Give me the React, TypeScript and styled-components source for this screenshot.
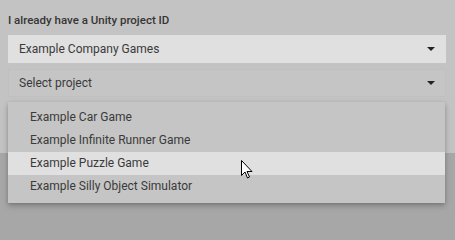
import React from 'react';
import styled, { createGlobalStyle } from 'styled-components';

const GlobalStyle = createGlobalStyle`
  html, body {
    margin: 0;
    padding: 0;
    background: #a7a7a7;
    font-family: Roboto, 'Liberation Sans', sans-serif;
  }
`;

const Page = styled.div`
  position: relative;
  width: 455px;
  height: 225px;
  background: #a7a7a7;
  overflow: hidden;
`;

const Panel = styled.div`
  background: #c3c3c3;
  height: 153px;
  padding: 13px 9px 0 8px;
  box-sizing: border-box;
  display: flex;
  flex-direction: column;
`;

const Label = styled.div`
  font-size: 11.5px;
  font-weight: 500;
  color: #353535;
  line-height: 15px;
  margin-bottom: 7px;
`;

const Select = styled.div<{ $active?: boolean }>`
  height: 28px;
  display: flex;
  align-items: center;
  justify-content: space-between;
  padding: 0 11px 0 11px;
  margin-bottom: 6px;
  background: ${(p) => (p.$active ? '#e0e0e0' : '#c5c5c5')};
  box-shadow: ${(p) => (p.$active ? 'none' : 'inset 0 0 0 1px #c0c0c0')};
  font-size: 12px;
  color: #3a3a3a;
`;

const Caret = styled.span`
  width: 0;
  height: 0;
  border-left: 4.5px solid transparent;
  border-right: 4.5px solid transparent;
  border-top: 4.5px solid #222;
`;

const Menu = styled.ul`
  position: absolute;
  left: 8px;
  top: 102px;
  width: 437px;
  margin: 0;
  padding: 4px 0 5px;
  list-style: none;
  background: #c5c5c5;
  box-shadow: 0 3px 6px rgba(0, 0, 0, 0.22), 0 1px 3px rgba(0, 0, 0, 0.12);
`;

const Item = styled.li<{ $hover?: boolean }>`
  height: 23px;
  line-height: 23px;
  padding-left: 22px;
  font-size: 12px;
  color: #3a3a3a;
  background: ${(p) => (p.$hover ? '#e0e0e0' : 'transparent')};
`;

const Cursor = styled.svg`
  position: absolute;
  left: 241px;
  top: 160px;
`;

const projects = [
  'Example Car Game',
  'Example Infinite Runner Game',
  'Example Puzzle Game',
  'Example Silly Object Simulator',
];

export default function App() {
  return (
    <>
      <GlobalStyle />
      <Page>
        <Panel>
          <Label>I already have a Unity project ID</Label>
          <Select $active>
            <span>Example Company Games</span>
            <Caret />
          </Select>
          <Select>
            <span>Select project</span>
            <Caret />
          </Select>
        </Panel>
        <Menu>
          {projects.map((name) => (
            <Item key={name} $hover={name === 'Example Puzzle Game'}>
              {name}
            </Item>
          ))}
        </Menu>
        <Cursor width="12" height="19" viewBox="0 0 12 19">
          <path
            d="M0.5 0.5 L0.5 15.5 L4 12 L6.5 18 L8.5 17 L6 11.5 L11 11.5 Z"
            fill="#fff"
            stroke="#000"
            strokeWidth="1"
          />
        </Cursor>
      </Page>
    </>
  );
}
